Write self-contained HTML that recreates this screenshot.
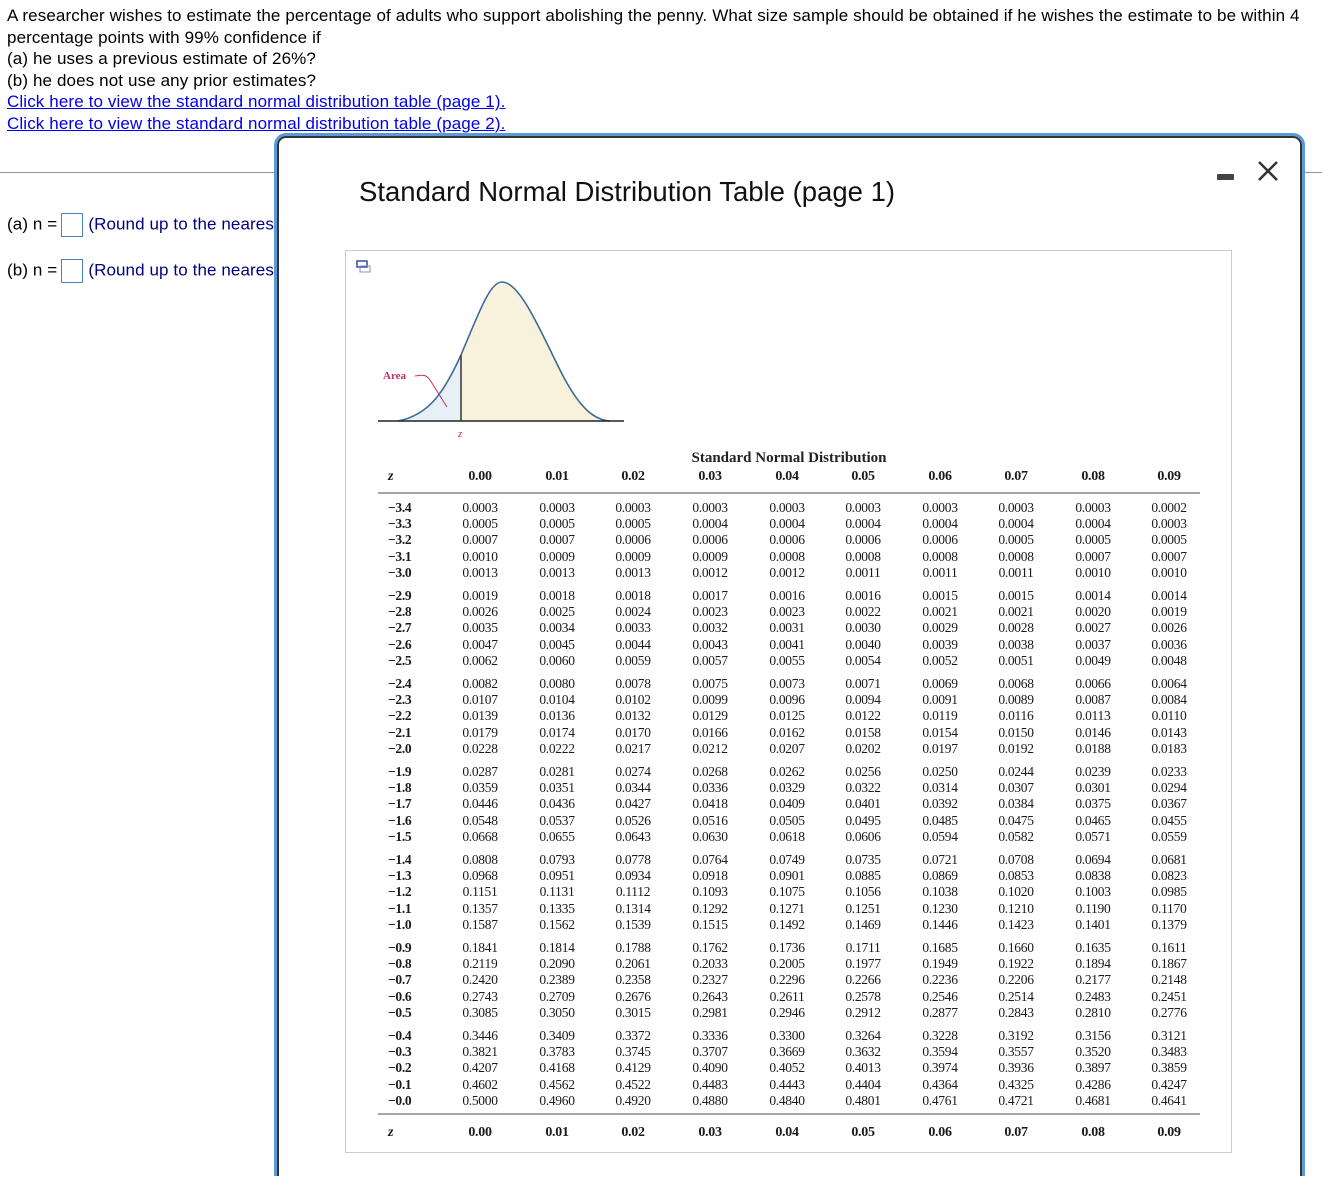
<!DOCTYPE html><html style="height:1180px;overflow:hidden"><head><meta charset="utf-8"><style>
body{margin:0;width:1322px;height:1180px;overflow:hidden;background:#fff;font-family:"Liberation Sans",Arial,sans-serif;position:relative}
.q{position:absolute;left:7px;top:5px;font-size:17px;letter-spacing:0.12px;line-height:21.6px;color:#000;width:1305px}
.q a{color:#0000ee;text-decoration:underline}
.hl{position:absolute;height:1px;background:#8a96a0;top:172px}
.ans{position:absolute;left:7px;font-size:17px;letter-spacing:0.1px;color:#000;white-space:nowrap}
.ans .b{display:inline-block;width:20px;height:22px;border:1px solid #4a7fd0;vertical-align:middle;margin:0 5px 0 4px}
.ans .r{color:#000080}
.dlg{position:absolute;left:274px;top:133px;width:1025px;height:1040px;border:3px solid #5a9ad6;border-bottom:none;border-radius:12px 12px 0 0;background:#fff}
.dlg:before{content:"";position:absolute;left:0;top:0;right:0;bottom:0;border:2px solid #333;border-bottom:none;border-radius:9px 9px 0 0}
.title{position:absolute;left:82px;top:40px;font-size:27.5px;color:#111}
.tb{position:absolute;left:345px;top:250px;width:885px;height:901px;border:1px solid #ccc;background:#fff}
.row{position:absolute;left:0;width:1322px;height:16px;font-family:"Liberation Serif",serif;font-size:13.5px;color:#1a1a1a;letter-spacing:-0.3px}
.row span{position:absolute;width:70px;text-align:center;top:0}
.row span:nth-child(1){left:388px;text-align:left;font-weight:bold}
.row span:nth-child(2){left:445px}.row span:nth-child(3){left:522px}.row span:nth-child(4){left:598px}
.row span:nth-child(5){left:675px}.row span:nth-child(6){left:752px}.row span:nth-child(7){left:828px}
.row span:nth-child(8){left:905px}.row span:nth-child(9){left:981px}.row span:nth-child(10){left:1058px}.row span:nth-child(11){left:1134px}
.hd{font-weight:bold;font-size:14px}
.hd span:nth-child(1){font-style:italic}
</style></head><body>
<div class="q">A researcher wishes to estimate the percentage of adults who support abolishing the penny. What size sample should be obtained if he wishes the estimate to be within 4 percentage points with 99% confidence if<br>(a) he uses a previous estimate of 26%?<br>(b) he does not use any prior estimates?<br><a>Click here to view the standard normal distribution table (page 1).</a><br><a>Click here to view the standard normal distribution table (page 2).</a></div>
<div class="hl" style="left:0;width:274px"></div>
<div class="hl" style="left:1305px;width:17px"></div>
<div class="ans" style="top:213px">(a) n =<span class="b"></span><span class="r">(Round up to the nearest integer.)</span></div>
<div class="ans" style="top:259px">(b) n =<span class="b"></span><span class="r">(Round up to the nearest integer.)</span></div>
<div class="dlg">
<div class="title">Standard Normal Distribution Table (page 1)</div>
<div style="position:absolute;left:940px;top:38px;width:17px;height:6px;background:#444;border-radius:1px"></div>
<svg style="position:absolute;left:980px;top:24px" width="22" height="22"><path d="M2 2L20 20M20 2L2 20" stroke="#333" stroke-width="2.5"/></svg>
</div>
<div class="tb"></div>
<svg style="position:absolute;left:356px;top:260px" width="16" height="14"><rect x="1" y="1" width="10" height="6" fill="none" stroke="#3a4aa0" stroke-width="1.5"/><rect x="4" y="6" width="10" height="6" fill="none" stroke="#8090c8" stroke-width="1"/></svg>
<svg style="position:absolute;left:0;top:0" width="1322" height="500">
<path d="M400 421 C430 415 445 390 461 355 L461 421 Z" fill="#e6f0f6"/>
<path d="M461 355 C480 310 490 282 502 282 C520 282 540 330 560 370 C580 410 595 420 605 421 L461 421 Z" fill="#f8f2dc"/>
<path d="M398 421 C430 415 445 390 461 355 C480 310 490 282 502 282 C520 282 540 330 560 370 C580 410 595 420 610 421" fill="none" stroke="#3d6aa0" stroke-width="1.6"/>
<line x1="378" y1="421" x2="624" y2="421" stroke="#222" stroke-width="1.5"/>
<line x1="461" y1="355" x2="461" y2="421" stroke="#333" stroke-width="1.5"/>
<path d="M415 376 C425 374 427 376 430 380 L447 407" fill="none" stroke="#c0306a" stroke-width="1"/>
<text x="383" y="379" font-family="Liberation Serif" font-size="11" font-weight="bold" fill="#c0306a">Area</text>
<text x="458" y="437" font-family="Liberation Serif" font-size="11" font-style="italic" fill="#c0306a">z</text>
<text x="789" y="462" text-anchor="middle" font-family="Liberation Serif" font-size="15" font-weight="bold" fill="#222">Standard Normal Distribution</text>
<line x1="378" y1="493" x2="1200" y2="493" stroke="#888" stroke-width="1.5"/>
</svg>
<div class="row hd" style="top:469px"><span>z</span><span>0.00</span><span>0.01</span><span>0.02</span><span>0.03</span><span>0.04</span><span>0.05</span><span>0.06</span><span>0.07</span><span>0.08</span><span>0.09</span></div>
<div class="row" style="top:500px"><span>−3.4</span><span>0.0003</span><span>0.0003</span><span>0.0003</span><span>0.0003</span><span>0.0003</span><span>0.0003</span><span>0.0003</span><span>0.0003</span><span>0.0003</span><span>0.0002</span></div>
<div class="row" style="top:516px"><span>−3.3</span><span>0.0005</span><span>0.0005</span><span>0.0005</span><span>0.0004</span><span>0.0004</span><span>0.0004</span><span>0.0004</span><span>0.0004</span><span>0.0004</span><span>0.0003</span></div>
<div class="row" style="top:532px"><span>−3.2</span><span>0.0007</span><span>0.0007</span><span>0.0006</span><span>0.0006</span><span>0.0006</span><span>0.0006</span><span>0.0006</span><span>0.0005</span><span>0.0005</span><span>0.0005</span></div>
<div class="row" style="top:549px"><span>−3.1</span><span>0.0010</span><span>0.0009</span><span>0.0009</span><span>0.0009</span><span>0.0008</span><span>0.0008</span><span>0.0008</span><span>0.0008</span><span>0.0007</span><span>0.0007</span></div>
<div class="row" style="top:565px"><span>−3.0</span><span>0.0013</span><span>0.0013</span><span>0.0013</span><span>0.0012</span><span>0.0012</span><span>0.0011</span><span>0.0011</span><span>0.0011</span><span>0.0010</span><span>0.0010</span></div>
<div class="row" style="top:588px"><span>−2.9</span><span>0.0019</span><span>0.0018</span><span>0.0018</span><span>0.0017</span><span>0.0016</span><span>0.0016</span><span>0.0015</span><span>0.0015</span><span>0.0014</span><span>0.0014</span></div>
<div class="row" style="top:604px"><span>−2.8</span><span>0.0026</span><span>0.0025</span><span>0.0024</span><span>0.0023</span><span>0.0023</span><span>0.0022</span><span>0.0021</span><span>0.0021</span><span>0.0020</span><span>0.0019</span></div>
<div class="row" style="top:620px"><span>−2.7</span><span>0.0035</span><span>0.0034</span><span>0.0033</span><span>0.0032</span><span>0.0031</span><span>0.0030</span><span>0.0029</span><span>0.0028</span><span>0.0027</span><span>0.0026</span></div>
<div class="row" style="top:637px"><span>−2.6</span><span>0.0047</span><span>0.0045</span><span>0.0044</span><span>0.0043</span><span>0.0041</span><span>0.0040</span><span>0.0039</span><span>0.0038</span><span>0.0037</span><span>0.0036</span></div>
<div class="row" style="top:653px"><span>−2.5</span><span>0.0062</span><span>0.0060</span><span>0.0059</span><span>0.0057</span><span>0.0055</span><span>0.0054</span><span>0.0052</span><span>0.0051</span><span>0.0049</span><span>0.0048</span></div>
<div class="row" style="top:676px"><span>−2.4</span><span>0.0082</span><span>0.0080</span><span>0.0078</span><span>0.0075</span><span>0.0073</span><span>0.0071</span><span>0.0069</span><span>0.0068</span><span>0.0066</span><span>0.0064</span></div>
<div class="row" style="top:692px"><span>−2.3</span><span>0.0107</span><span>0.0104</span><span>0.0102</span><span>0.0099</span><span>0.0096</span><span>0.0094</span><span>0.0091</span><span>0.0089</span><span>0.0087</span><span>0.0084</span></div>
<div class="row" style="top:708px"><span>−2.2</span><span>0.0139</span><span>0.0136</span><span>0.0132</span><span>0.0129</span><span>0.0125</span><span>0.0122</span><span>0.0119</span><span>0.0116</span><span>0.0113</span><span>0.0110</span></div>
<div class="row" style="top:725px"><span>−2.1</span><span>0.0179</span><span>0.0174</span><span>0.0170</span><span>0.0166</span><span>0.0162</span><span>0.0158</span><span>0.0154</span><span>0.0150</span><span>0.0146</span><span>0.0143</span></div>
<div class="row" style="top:741px"><span>−2.0</span><span>0.0228</span><span>0.0222</span><span>0.0217</span><span>0.0212</span><span>0.0207</span><span>0.0202</span><span>0.0197</span><span>0.0192</span><span>0.0188</span><span>0.0183</span></div>
<div class="row" style="top:764px"><span>−1.9</span><span>0.0287</span><span>0.0281</span><span>0.0274</span><span>0.0268</span><span>0.0262</span><span>0.0256</span><span>0.0250</span><span>0.0244</span><span>0.0239</span><span>0.0233</span></div>
<div class="row" style="top:780px"><span>−1.8</span><span>0.0359</span><span>0.0351</span><span>0.0344</span><span>0.0336</span><span>0.0329</span><span>0.0322</span><span>0.0314</span><span>0.0307</span><span>0.0301</span><span>0.0294</span></div>
<div class="row" style="top:796px"><span>−1.7</span><span>0.0446</span><span>0.0436</span><span>0.0427</span><span>0.0418</span><span>0.0409</span><span>0.0401</span><span>0.0392</span><span>0.0384</span><span>0.0375</span><span>0.0367</span></div>
<div class="row" style="top:813px"><span>−1.6</span><span>0.0548</span><span>0.0537</span><span>0.0526</span><span>0.0516</span><span>0.0505</span><span>0.0495</span><span>0.0485</span><span>0.0475</span><span>0.0465</span><span>0.0455</span></div>
<div class="row" style="top:829px"><span>−1.5</span><span>0.0668</span><span>0.0655</span><span>0.0643</span><span>0.0630</span><span>0.0618</span><span>0.0606</span><span>0.0594</span><span>0.0582</span><span>0.0571</span><span>0.0559</span></div>
<div class="row" style="top:852px"><span>−1.4</span><span>0.0808</span><span>0.0793</span><span>0.0778</span><span>0.0764</span><span>0.0749</span><span>0.0735</span><span>0.0721</span><span>0.0708</span><span>0.0694</span><span>0.0681</span></div>
<div class="row" style="top:868px"><span>−1.3</span><span>0.0968</span><span>0.0951</span><span>0.0934</span><span>0.0918</span><span>0.0901</span><span>0.0885</span><span>0.0869</span><span>0.0853</span><span>0.0838</span><span>0.0823</span></div>
<div class="row" style="top:884px"><span>−1.2</span><span>0.1151</span><span>0.1131</span><span>0.1112</span><span>0.1093</span><span>0.1075</span><span>0.1056</span><span>0.1038</span><span>0.1020</span><span>0.1003</span><span>0.0985</span></div>
<div class="row" style="top:901px"><span>−1.1</span><span>0.1357</span><span>0.1335</span><span>0.1314</span><span>0.1292</span><span>0.1271</span><span>0.1251</span><span>0.1230</span><span>0.1210</span><span>0.1190</span><span>0.1170</span></div>
<div class="row" style="top:917px"><span>−1.0</span><span>0.1587</span><span>0.1562</span><span>0.1539</span><span>0.1515</span><span>0.1492</span><span>0.1469</span><span>0.1446</span><span>0.1423</span><span>0.1401</span><span>0.1379</span></div>
<div class="row" style="top:940px"><span>−0.9</span><span>0.1841</span><span>0.1814</span><span>0.1788</span><span>0.1762</span><span>0.1736</span><span>0.1711</span><span>0.1685</span><span>0.1660</span><span>0.1635</span><span>0.1611</span></div>
<div class="row" style="top:956px"><span>−0.8</span><span>0.2119</span><span>0.2090</span><span>0.2061</span><span>0.2033</span><span>0.2005</span><span>0.1977</span><span>0.1949</span><span>0.1922</span><span>0.1894</span><span>0.1867</span></div>
<div class="row" style="top:972px"><span>−0.7</span><span>0.2420</span><span>0.2389</span><span>0.2358</span><span>0.2327</span><span>0.2296</span><span>0.2266</span><span>0.2236</span><span>0.2206</span><span>0.2177</span><span>0.2148</span></div>
<div class="row" style="top:989px"><span>−0.6</span><span>0.2743</span><span>0.2709</span><span>0.2676</span><span>0.2643</span><span>0.2611</span><span>0.2578</span><span>0.2546</span><span>0.2514</span><span>0.2483</span><span>0.2451</span></div>
<div class="row" style="top:1005px"><span>−0.5</span><span>0.3085</span><span>0.3050</span><span>0.3015</span><span>0.2981</span><span>0.2946</span><span>0.2912</span><span>0.2877</span><span>0.2843</span><span>0.2810</span><span>0.2776</span></div>
<div class="row" style="top:1028px"><span>−0.4</span><span>0.3446</span><span>0.3409</span><span>0.3372</span><span>0.3336</span><span>0.3300</span><span>0.3264</span><span>0.3228</span><span>0.3192</span><span>0.3156</span><span>0.3121</span></div>
<div class="row" style="top:1044px"><span>−0.3</span><span>0.3821</span><span>0.3783</span><span>0.3745</span><span>0.3707</span><span>0.3669</span><span>0.3632</span><span>0.3594</span><span>0.3557</span><span>0.3520</span><span>0.3483</span></div>
<div class="row" style="top:1060px"><span>−0.2</span><span>0.4207</span><span>0.4168</span><span>0.4129</span><span>0.4090</span><span>0.4052</span><span>0.4013</span><span>0.3974</span><span>0.3936</span><span>0.3897</span><span>0.3859</span></div>
<div class="row" style="top:1077px"><span>−0.1</span><span>0.4602</span><span>0.4562</span><span>0.4522</span><span>0.4483</span><span>0.4443</span><span>0.4404</span><span>0.4364</span><span>0.4325</span><span>0.4286</span><span>0.4247</span></div>
<div class="row" style="top:1093px"><span>−0.0</span><span>0.5000</span><span>0.4960</span><span>0.4920</span><span>0.4880</span><span>0.4840</span><span>0.4801</span><span>0.4761</span><span>0.4721</span><span>0.4681</span><span>0.4641</span></div>
<svg style="position:absolute;left:0;top:1112px" width="1322" height="4"><line x1="378" y1="2" x2="1200" y2="2" stroke="#888" stroke-width="1.5"/></svg>
<div class="row hd" style="top:1125px"><span>z</span><span>0.00</span><span>0.01</span><span>0.02</span><span>0.03</span><span>0.04</span><span>0.05</span><span>0.06</span><span>0.07</span><span>0.08</span><span>0.09</span></div>
</body></html>
